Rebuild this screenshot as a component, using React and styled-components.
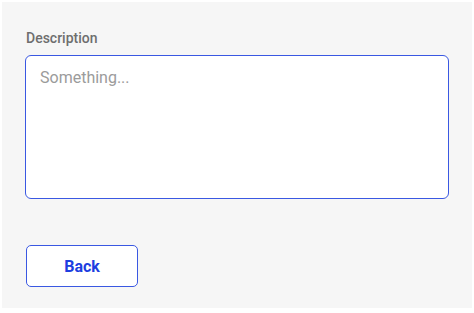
import React from "react";
import styled, { createGlobalStyle } from "styled-components";

const GlobalStyle = createGlobalStyle`
  html, body {
    margin: 0;
    padding: 0;
    background: #ffffff;
    font-family: Roboto, "Liberation Sans", sans-serif;
  }
  * {
    box-sizing: border-box;
  }
`;

const Panel = styled.div`
  margin: 2px;
  width: 470px;
  height: 306px;
  background: #f6f6f6;
  padding: 26px 23px 0 23px;
  display: flex;
  flex-direction: column;
`;

const Field = styled.div`
  display: flex;
  flex-direction: column;
`;

const Label = styled.label`
  font-size: 14px;
  font-weight: 500;
  color: #6e6e6e;
  line-height: 20px;
  margin-left: 1px;
  margin-bottom: 7px;
`;

const TextArea = styled.textarea`
  width: 100%;
  height: 144px;
  resize: none;
  border: 1.5px solid #3a58e2;
  border-radius: 6px;
  background: #ffffff;
  padding: 12px 14px;
  font-family: Roboto, "Liberation Sans", sans-serif;
  font-size: 16px;
  color: #333;
  outline: none;
  &::placeholder {
    color: #9b9b9b;
  }
`;

const Actions = styled.div`
  display: flex;
  margin-top: 46px;
`;

const Button = styled.button`
  width: 112px;
  height: 42px;
  margin-left: 1px;
  background: #ffffff;
  border: 1.5px solid #3a58e2;
  border-radius: 5px;
  color: #1d3fe0;
  font-family: Roboto, "Liberation Sans", sans-serif;
  font-size: 16px;
  font-weight: 700;
  cursor: pointer;
`;

export default function App() {
  return (
    <>
      <GlobalStyle />
      <Panel>
        <Field>
          <Label htmlFor="desc">Description</Label>
          <TextArea id="desc" placeholder="Something..." />
        </Field>
        <Actions>
          <Button>Back</Button>
        </Actions>
      </Panel>
    </>
  );
}
